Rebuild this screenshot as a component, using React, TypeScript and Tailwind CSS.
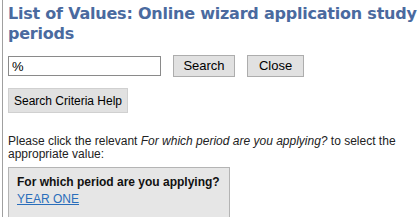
import { useState } from 'react'

function App() {
    const [query, setQuery] = useState('%')

    return (
        <div className="min-h-[217px] w-[420px] bg-white overflow-hidden">
            <div className="ml-[2px] min-h-[217px] border-l border-[#a0a0a0] pl-[5px] pt-[4px]">
                {/* header */}
                <h1 className="font-['DejaVu_Sans',Verdana,sans-serif] font-bold text-[16px] leading-[20px] text-[#4a6a9f] tracking-[-0.22px]">
                    List of Values: Online wizard application study periods
                </h1>

                {/* search row */}
                <div className="mt-[11px] flex items-center font-['Liberation_Sans',Arial,sans-serif] text-[13px]">
                    <input
                        value={query}
                        onChange={(e) => setQuery(e.target.value)}
                        className="w-[153px] h-[20px] border border-[#8a8a8a] px-[3px] text-[13px] text-black outline-none"
                    />
                    <button className="ml-[12px] w-[62px] h-[22px] bg-[#e1e1e1] border border-[#adadad] text-black">
                        Search
                    </button>
                    <button className="ml-[12px] w-[57px] h-[22px] bg-[#e1e1e1] border border-[#adadad] text-black">
                        Close
                    </button>
                </div>

                <button className="mt-[11px] h-[25px] w-[120px] whitespace-nowrap bg-[#e1e1e1] border border-[#d0d0d0] font-['Liberation_Sans',Arial,sans-serif] text-[12px] text-black">
                    Search Criteria Help
                </button>

                {/* instructions */}
                <p className="mt-[22px] w-[400px] font-['Liberation_Sans',Arial,sans-serif] text-[12px] leading-[13px] text-[#222]">
                    Please click the relevant <i>For which period are you applying?</i> to select the appropriate value:
                </p>

                <div className="mt-[6px] w-[222px] h-[60px] bg-[#e6e6e6] border border-[#b4b4b4] px-[8px] pt-[7px] font-['Liberation_Sans',Arial,sans-serif]">
                    <div className="whitespace-nowrap font-bold text-[12px] leading-[15px] text-[#111]">For which period are you applying?</div>
                    <a href="#" className="block text-[12px] leading-[19px] text-[#2a6ebb] underline">YEAR ONE</a>
                </div>
            </div>
        </div>
    )
}

export default App
